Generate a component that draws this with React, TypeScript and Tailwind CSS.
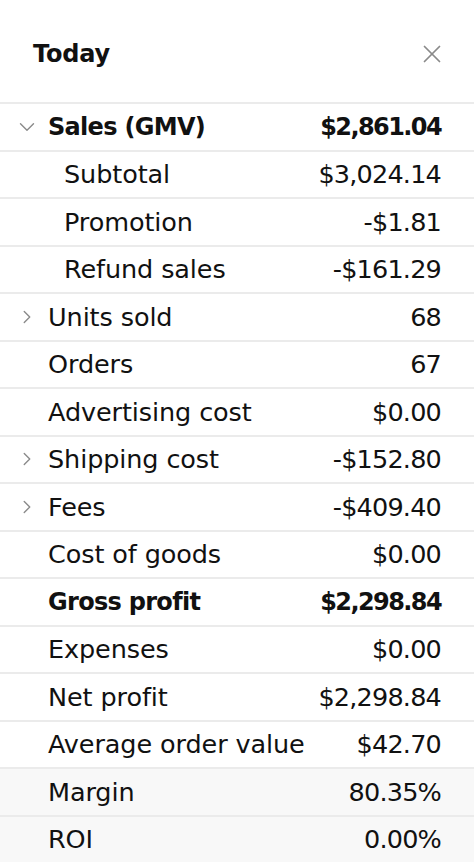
import { ChevronDown, ChevronRight, X } from 'lucide-react';

type Row = {
  label: string;
  value: string;
  bold?: boolean;
  sub?: boolean;
  toggle?: 'open' | 'closed';
  shaded?: boolean;
};

const rows: Row[] = [
  { label: 'Sales (GMV)', value: '$2,861.04', bold: true, toggle: 'open' },
  { label: 'Subtotal', value: '$3,024.14', sub: true },
  { label: 'Promotion', value: '-$1.81', sub: true },
  { label: 'Refund sales', value: '-$161.29', sub: true },
  { label: 'Units sold', value: '68', toggle: 'closed' },
  { label: 'Orders', value: '67' },
  { label: 'Advertising cost', value: '$0.00' },
  { label: 'Shipping cost', value: '-$152.80', toggle: 'closed' },
  { label: 'Fees', value: '-$409.40', toggle: 'closed' },
  { label: 'Cost of goods', value: '$0.00' },
  { label: 'Gross profit', value: '$2,298.84', bold: true },
  { label: 'Expenses', value: '$0.00' },
  { label: 'Net profit', value: '$2,298.84' },
  { label: 'Average order value', value: '$42.70' },
  { label: 'Margin', value: '80.35%', shaded: true },
  { label: 'ROI', value: '0.00%', shaded: true },
];

export default function App() {
  return (
    <div className="h-[862px] w-[474px] overflow-hidden bg-white font-['DejaVu_Sans',sans-serif] text-[#111]">
      <div className="flex h-[102px] items-center justify-between pl-[33px] pr-[27px] pt-[6px]">
        <h1 className="text-[24px] font-bold tracking-[-0.2px]">Today</h1>
        <X className="h-[30px] w-[30px] text-[#8a8a8a]" strokeWidth={1.4} />
      </div>

      <div className="border-t-2 border-[#ebebeb]">
        {rows.map((row) => (
          <div
            key={row.label}
            className={`flex h-[47.5px] items-center border-b-2 border-[#ebebeb] pr-[33px] ${
              row.shaded ? 'bg-[#f8f8f8]' : ''
            } ${row.bold ? 'text-[24px] font-bold' : 'text-[25.5px]'}`}
          >
            <div className="flex w-[48px] shrink-0 justify-center pl-[6px]">
              {row.toggle === 'open' && (
                <ChevronDown className="h-[26px] w-[26px] text-[#8a8a8a]" strokeWidth={1.3} />
              )}
              {row.toggle === 'closed' && (
                <ChevronRight className="h-[22px] w-[22px] text-[#8a8a8a]" strokeWidth={1.5} />
              )}
            </div>
            <span
              className={`flex-1 ${row.sub ? 'pl-[16px]' : ''} ${
                row.bold ? 'tracking-[-0.7px]' : 'tracking-[-0.1px]'
              }`}
            >
              {row.label}
            </span>
            <span className={row.bold ? 'tracking-[-1.6px]' : 'tracking-[-0.8px]'}>{row.value}</span>
          </div>
        ))}
      </div>
    </div>
  );
}
